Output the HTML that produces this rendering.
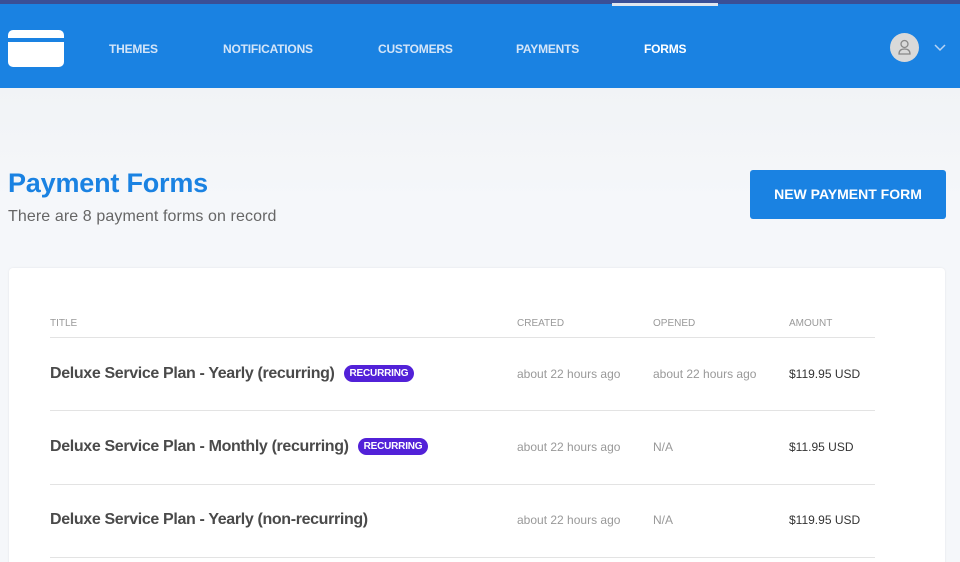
<!DOCTYPE html>
<html style="overflow:hidden;height:562px"><head><style>
*{margin:0;padding:0;box-sizing:border-box}
body{width:960px;height:562px;overflow:hidden;font-family:"Liberation Sans",sans-serif;background:linear-gradient(#eef0f3,#f5f7fa 200px);position:relative}
.top{position:absolute;left:0;top:0;width:960px;height:4px;background:#3a4f96}
.ind{position:absolute;left:612px;top:3px;width:106px;height:3px;background:#dfe6ef}
.nav{position:absolute;left:0;top:4px;width:960px;height:84px;background:#1a82e2}
.logo{position:absolute;left:8px;top:26px;width:56px;height:37px;background:#fff;border-radius:5px}
.logo:after{content:"";position:absolute;left:0;top:8px;width:56px;height:4px;background:#1a82e2}
.nav a{position:absolute;top:38px;color:#d4e5f8;font-size:12px;font-weight:bold;text-decoration:none;letter-spacing:-0.2px}
.av{position:absolute;left:890px;top:29px;width:29px;height:29px;border-radius:50%;background:#d9d9d9}
.chev{position:absolute;left:934px;top:40px}
h1{position:absolute;left:8px;top:168px;font-size:27px;color:#1a82e2;font-weight:bold;letter-spacing:-0.2px}
.sub{position:absolute;left:8px;top:208px;font-size:16px;color:#666;letter-spacing:0.1px}
.btn{position:absolute;left:750px;top:170px;width:196px;height:49px;background:#1a82e2;border-radius:3px;color:#fff;font-weight:bold;font-size:14px;text-align:center;line-height:49px}
.card{position:absolute;left:9px;top:268px;width:936px;height:300px;background:#fff;border-radius:4px;box-shadow:0 0 2px rgba(0,0,0,.08)}
.th{position:absolute;top:318px;font-size:10px;color:#999}
.line{position:absolute;left:50px;width:825px;height:1px;background:#e3e3e3}
.t{position:absolute;left:50px;font-size:16px;font-weight:bold;color:#4a4a4a;letter-spacing:-0.35px}
.badge{display:inline-block;background:#5221d8;color:#fff;font-size:10px;padding:3px 6px;border-radius:9px;margin-left:9px;vertical-align:2px;letter-spacing:-0.2px}
.c{position:absolute;font-size:12px;color:#999}
.a{position:absolute;left:789px;font-size:12px;color:#333}
</style></head><body>
<div class="nav">
<div class="logo"></div>
<a style="left:109px">THEMES</a><a style="left:223px">NOTIFICATIONS</a><a style="left:378px">CUSTOMERS</a><a style="left:516px">PAYMENTS</a><a style="left:644px;color:#fff">FORMS</a>
<div class="av"><svg width="29" height="29" viewBox="0 0 29 29"><circle cx="14.5" cy="11" r="3.5" fill="none" stroke="#888" stroke-width="1.3"/><path d="M9 21q0-5 5.5-5t5.5 5z" fill="none" stroke="#888" stroke-width="1.3"/></svg></div>
<svg class="chev" width="12" height="8"><path d="M1 1l5 5 5-5" fill="none" stroke="#b8d4f4" stroke-width="1.5"/></svg>
</div>
<div class="top"></div><div class="ind"></div>
<h1>Payment Forms</h1>
<div class="sub">There are 8 payment forms on record</div>
<div class="btn">NEW PAYMENT FORM</div>
<div class="card"></div>
<div class="th" style="left:50px">TITLE</div><div class="th" style="left:517px">CREATED</div><div class="th" style="left:653px">OPENED</div><div class="th" style="left:789px">AMOUNT</div>
<div class="line" style="top:337px"></div>
<div class="t" style="top:365px">Deluxe Service Plan - Yearly (recurring)<span class="badge">RECURRING</span></div>
<div class="c" style="left:517px;top:367px">about 22 hours ago</div><div class="c" style="left:653px;top:367px">about 22 hours ago</div><div class="a" style="top:367px">$119.95 USD</div>
<div class="line" style="top:410px"></div>
<div class="t" style="top:438px">Deluxe Service Plan - Monthly (recurring)<span class="badge">RECURRING</span></div>
<div class="c" style="left:517px;top:440px">about 22 hours ago</div><div class="c" style="left:653px;top:440px">N/A</div><div class="a" style="top:440px">$11.95 USD</div>
<div class="line" style="top:484px"></div>
<div class="t" style="top:511px">Deluxe Service Plan - Yearly (non-recurring)</div>
<div class="c" style="left:517px;top:513px">about 22 hours ago</div><div class="c" style="left:653px;top:513px">N/A</div><div class="a" style="top:513px">$119.95 USD</div>
<div class="line" style="top:557px"></div>
</body></html>
